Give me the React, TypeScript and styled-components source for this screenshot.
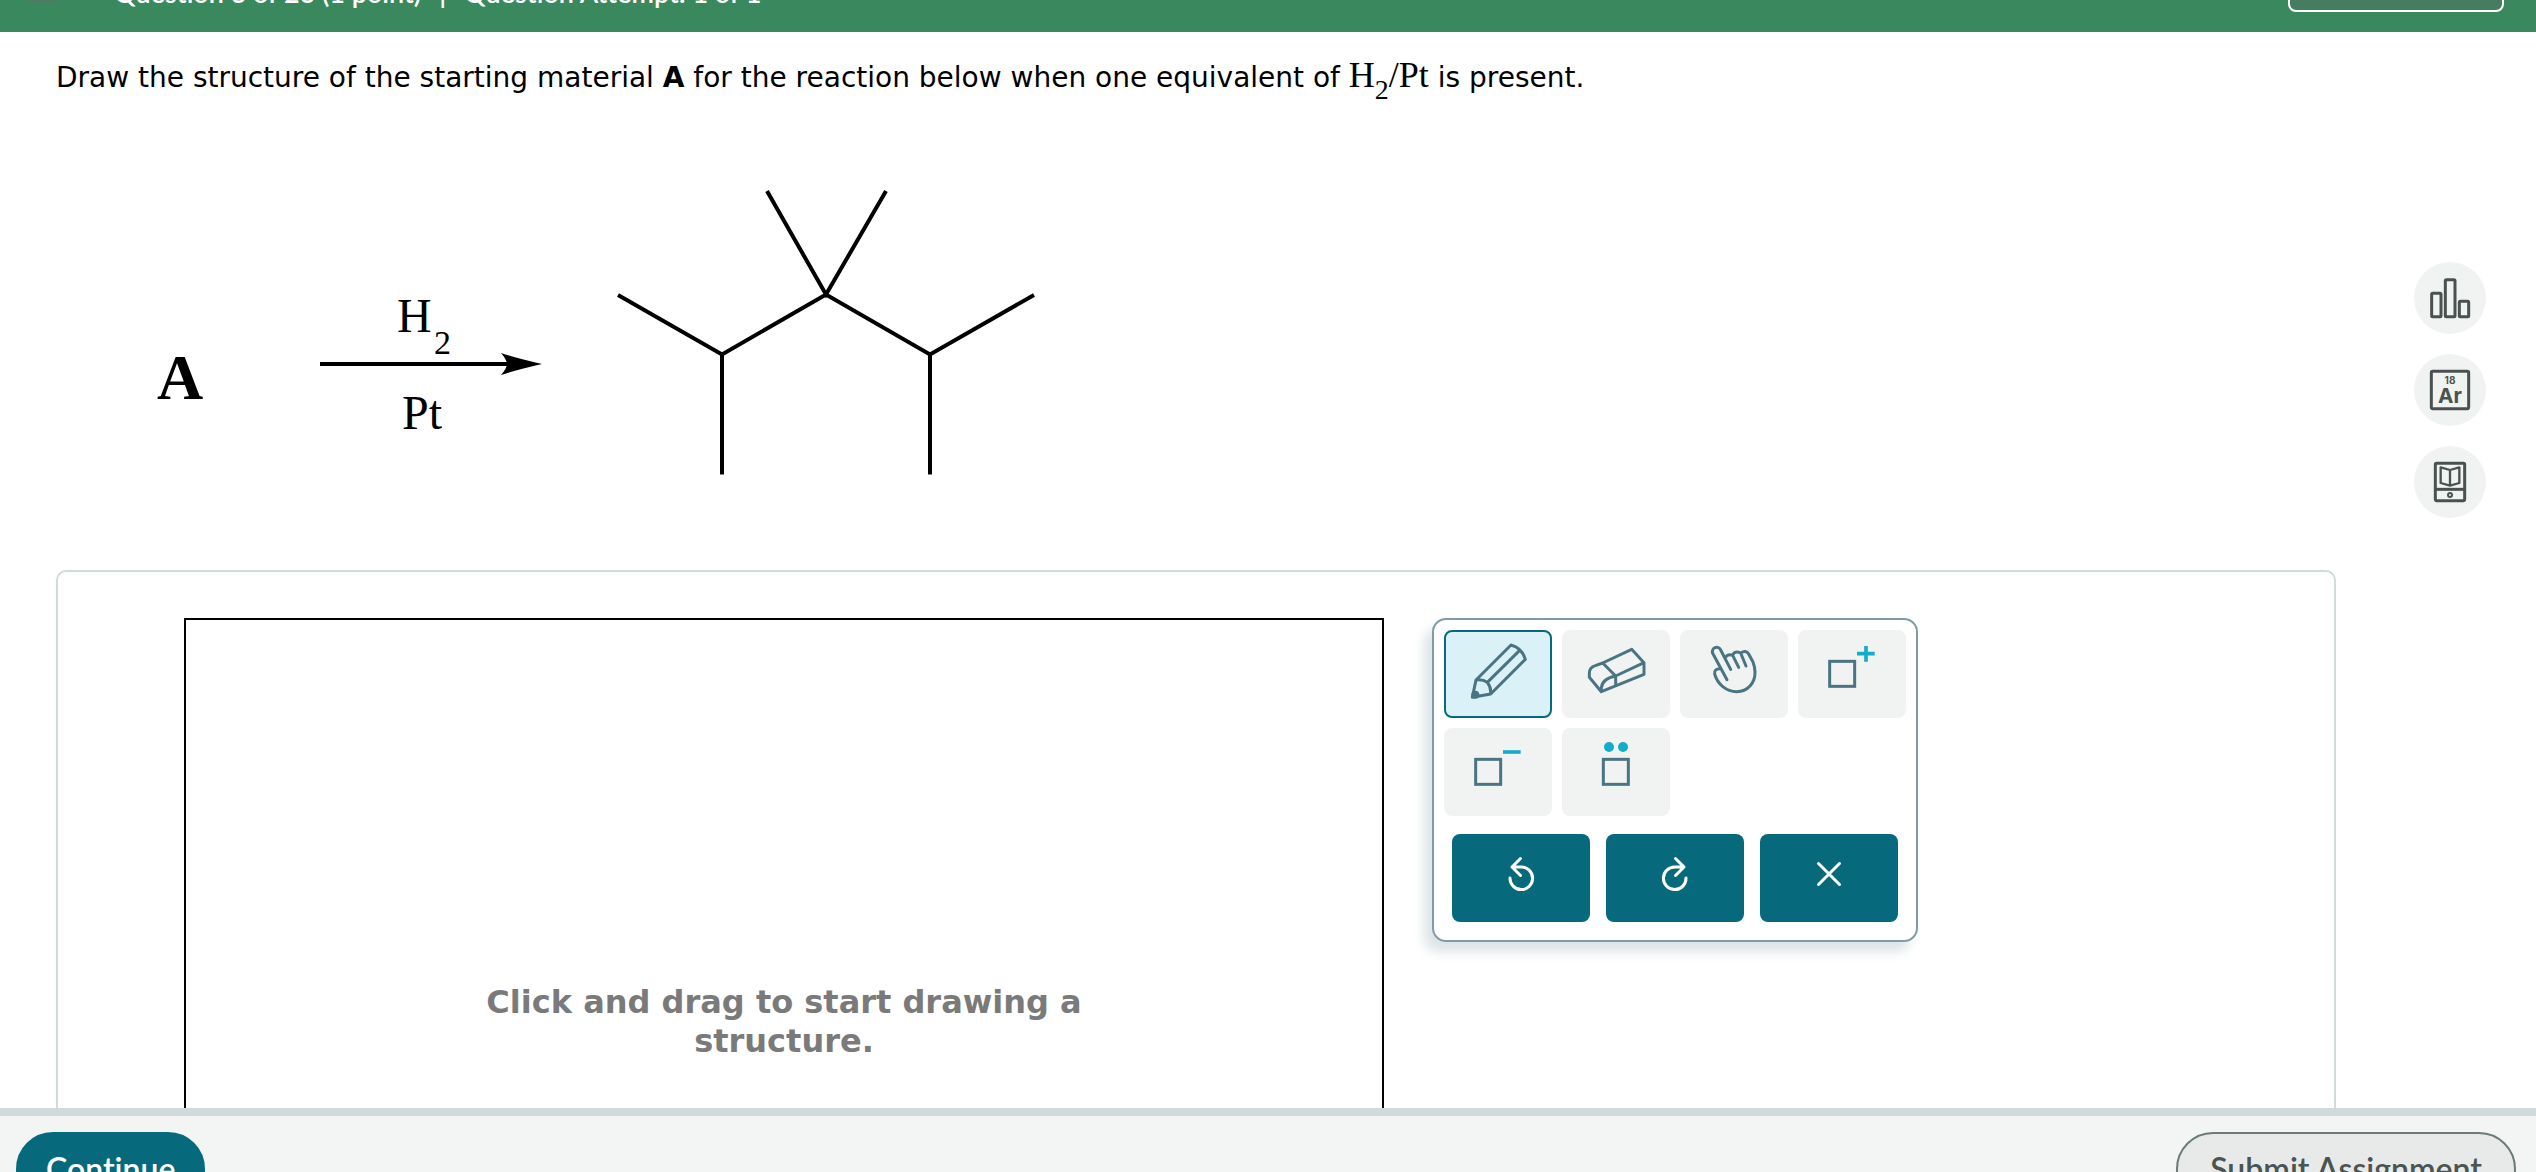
import React from "react";
import styled, { createGlobalStyle } from "styled-components";

const Global = createGlobalStyle`
  * { box-sizing: border-box; }
  body { margin: 0; background: #fff; color: #000; font-family: "DejaVu Sans", sans-serif; }
  button { font: inherit; margin: 0; padding: 0; border: 0; cursor: pointer; }
`;

const uiFont = `Lato, "Open Sans", sans-serif`;
const serifFont = `"Liberation Serif", serif`;

const Page = styled.div`
  height: 100vh;
  display: flex;
  flex-direction: column;
  overflow: hidden;
`;

const TopBar = styled.header`
  flex: none;
  height: 32px;
  display: flex;
  align-items: flex-end;
  padding: 0 32px 0 7px;
  overflow: hidden;
  background: #3a885d;
  color: #fff;
  font-family: ${uiFont};
`;

const MenuButton = styled.button`
  flex: none;
  width: 72px;
  height: 72px;
  && { margin-bottom: 28px; }
  border-radius: 50%;
  background: #4a7d62;
`;

const Progress = styled.p`
  flex: 1;
  display: flex;
  gap: 18px;
  margin: 0 0 23px 35px;
  font-size: 27px;
  font-weight: 600;
  font-variant-ligatures: none;
  line-height: 32px;
  white-space: nowrap;
`;

const HeaderButton = styled.button`
  flex: none;
  width: 216px;
  height: 56px;
  && { margin-bottom: 20px; border: 2px solid #fff; }
  border-radius: 8px;
  background: #467c60;
  color: #fff;
`;

const Body = styled.div`
  flex: 1;
  min-height: 0;
  display: grid;
  grid-template-columns: minmax(0, 1fr) 200px;
  overflow: hidden;
`;

const Question = styled.main`
  padding: 24px 0 0 56px;
`;

const Prompt = styled.p`
  margin: 0;
  font-size: 28px;
  line-height: 44px;
`;

const Formula = styled.span`
  font-family: ${serifFont};
  font-size: 36px;
  line-height: 32px;
`;

const Sub = styled.sub`
  font-size: 28px;
  line-height: 0;
  vertical-align: -12px;
`;

const Scheme = styled.svg`
  display: block;
  width: 1000px;
  height: 440px;
  margin-bottom: 30px;
  text { font-family: ${serifFont}; }
`;

const Workspace = styled.section`
  display: flex;
  align-items: flex-start;
  gap: 48px;
  padding: 46px 126px;
  border: 2px solid #d0dcdc;
  border-radius: 10px;
`;

const DrawArea = styled.div`
  flex: 0 1 1200px;
  height: 808px;
  display: flex;
  align-items: center;
  justify-content: center;
  border: 2px solid #000;
`;

const Hint = styled.p`
  width: 640px;
  margin: 0;
  color: #7a7a7a;
  font-size: 32px;
  font-weight: 700;
  line-height: 39px;
  text-align: center;
`;

const Palette = styled.div`
  flex: none;
  padding: 10px;
  border: 2px solid #7f9ca6;
  border-radius: 14px;
  background: #fff;
  box-shadow: -8px 10px 12px #dde4e7;
`;

const Tools = styled.div`
  display: grid;
  grid-template-columns: repeat(4, 108px);
  gap: 10px;
`;

const ToolButton = styled.button<{ $active?: boolean }>`
  && {
    height: 88px;
    padding-bottom: 8px;
    border: 2px solid ${(p) => (p.$active ? "#066a7c" : "#f1f3f3")};
  }
  display: flex;
  align-items: center;
  justify-content: center;
  border-radius: 8px;
  background: ${(p) => (p.$active ? "#daf2f7" : "#f1f3f3")};
`;

const ToolIcon = styled.svg.attrs({ viewBox: "0 0 216 216" })`
  width: 72px;
  height: 72px;
  fill: none;
  stroke: #4a7482;
  stroke-width: 9;
  stroke-linejoin: round;
`;

const Actions = styled.div`
  display: grid;
  grid-template-columns: repeat(3, 1fr);
  gap: 16px;
  margin: 18px 8px 8px;
`;

const ActionButton = styled.button`
  height: 88px;
  display: flex;
  align-items: center;
  justify-content: center;
  border-radius: 8px;
  background: #076a7c;
`;

const ActionIcon = styled.svg.attrs({ viewBox: "0 0 48 48" })`
  width: 48px;
  height: 48px;
  fill: none;
  stroke: #fff;
  stroke-width: 3;
  stroke-linecap: round;
  stroke-linejoin: round;
`;

const SideTools = styled.aside`
  display: flex;
  flex-direction: column;
  align-items: flex-end;
  gap: 20px;
  padding: 230px 50px 0 0;
`;

const RoundButton = styled.button`
  width: 72px;
  height: 72px;
  border-radius: 50%;
  background: #f1f3f3;
`;

const SideIcon = styled.svg.attrs({ viewBox: "0 0 216 216" })`
  display: block;
  width: 72px;
  height: 72px;
  fill: none;
  stroke: #4a5250;
  stroke-width: 9;
  stroke-linejoin: round;
  text {
    fill: #4a5250;
    stroke: none;
    font-family: Inter, sans-serif;
    font-weight: 700;
    text-anchor: middle;
  }
`;

const Footer = styled.footer`
  flex: none;
  height: 64px;
  display: flex;
  justify-content: space-between;
  align-items: flex-start;
  padding: 16px 20px 0 16px;
  border-top: 8px solid #d0dadd;
  background: #f3f5f5;
  overflow: hidden;
`;

const PillButton = styled.button<{ $primary?: boolean }>`
  && {
    flex: none;
    height: 74px;
    padding: 0 ${(p) => (p.$primary ? 28 : 32)}px;
    border: 2px solid ${(p) => (p.$primary ? "#076a7c" : "#6b7b79")};
    font-family: ${uiFont};
    font-size: 32px;
    font-weight: 600;
    font-variant-ligatures: none;
    line-height: 40px;
  }
  border-radius: 38px;
  background: ${(p) => (p.$primary ? "#076a7c" : "#e8eae9")};
  color: ${(p) => (p.$primary ? "#fff" : "#4a5452")};
`;

const Reaction = () => (
  <Scheme viewBox="56 100 1000 440" role="img" aria-label="A reacts with H2 over Pt">
    <text x="157" y="399" fontSize="64" fontWeight="700">A</text>
    <text x="397" y="332" fontSize="48">H</text>
    <text x="434" y="354" fontSize="34">2</text>
    <text x="402" y="429" fontSize="48">Pt</text>
    <path d="M320 364H510" stroke="#000" strokeWidth="4" />
    <path d="M542 364Q516 370 501 375Q507 368 507 364Q507 360 501 353Q516 358 542 364Z" />
    <path
      d="M767 191L826 294.500L886 191M618 295L722 354.500L826 294.500L930 354.500L1034 295M722 354.500V474.500M930 354.500V474.500"
      fill="none"
      stroke="#000"
      strokeWidth="4"
    />
  </Scheme>
);

const Pencil = () => (
  <ToolIcon>
    <path d="M42 138L147 33Q180 42 190 76L86 180L31 190L42 138Q60 134 76 145Q88 160 86 180M76 145L176 46" />
    <circle cx="40" cy="182" r="12" fill="#4a7482" stroke="none" />
  </ToolIcon>
);

const Eraser = () => (
  <ToolIcon>
    <path d="M68 87L155 46L192 86V121L64 173L28 130V118Q28 100 46 95L68 87L107 126L192 86M107 126V154M64 173V162Q66 134 107 126" />
  </ToolIcon>
);

const Hand = () => (
  <ToolIcon strokeLinecap="round">
    <path
      d="M98 106L68 48A13 13 0 0 0 44 58L87 137M66 104Q48 104 50 120C58 150 85 173 116 173C150 173 172 145 171 114Q171 100 165 84L152 60Q144 46 128 57L144 96M82 70Q90 58 104 64L122 100M104 62Q112 49 128 57"
    />
  </ToolIcon>
);

const ChargeBox = ({ kind }: { kind: "plus" | "minus" | "pair" }) => (
  <ToolIcon>
    <rect x={kind === "pair" ? 70 : 41} y="82" width="75" height="75" strokeLinejoin="miter" />
    {kind === "plus" && <path d="M123 59H176M150 36V83" stroke="#14accb" strokeWidth="11" />}
    {kind === "minus" && <path d="M123 60H176" stroke="#14accb" strokeWidth="11" />}
    {kind === "pair" && (
      <g fill="#14accb" stroke="none">
        <circle cx="87" cy="45" r="15" />
        <circle cx="129" cy="45" r="15" />
      </g>
    )}
  </ToolIcon>
);

export default function App() {
  return (
    <Page>
      <Global />
      <TopBar>
        <MenuButton aria-label="Menu" />
        <Progress>
          <span>Question 3 of 26 (1 point)</span>
          <span>|</span>
          <span>Question Attempt: 1 of 1</span>
        </Progress>
        <HeaderButton aria-label="Time remaining" />
      </TopBar>

      <Body>
        <Question>
          <Prompt>
            Draw the structure of the starting material <b>A</b> for the reaction below when one
            equivalent of{" "}
            <Formula>
              H<Sub>2</Sub>/Pt
            </Formula>{" "}
            is present.
          </Prompt>
          <Reaction />
          <Workspace>
            <DrawArea>
              <Hint>Click and drag to start drawing a structure.</Hint>
            </DrawArea>
            <Palette>
              <Tools>
                <ToolButton $active aria-label="Draw"><Pencil /></ToolButton>
                <ToolButton aria-label="Erase"><Eraser /></ToolButton>
                <ToolButton aria-label="Move"><Hand /></ToolButton>
                <ToolButton aria-label="Positive charge"><ChargeBox kind="plus" /></ToolButton>
                <ToolButton aria-label="Negative charge"><ChargeBox kind="minus" /></ToolButton>
                <ToolButton aria-label="Lone pair"><ChargeBox kind="pair" /></ToolButton>
              </Tools>
              <Actions>
                <ActionButton aria-label="Undo">
                  <ActionIcon>
                    <path d="M13 24A11.300 11.300 0 1 0 24 13H15M23.500 4.500L15 13L23.500 21.500" />
                  </ActionIcon>
                </ActionButton>
                <ActionButton aria-label="Redo">
                  <ActionIcon>
                    <path d="M35 24A11.300 11.300 0 1 1 24 13H33M24.500 4.500L33 13L24.500 21.500" />
                  </ActionIcon>
                </ActionButton>
                <ActionButton aria-label="Clear">
                  <ActionIcon>
                    <path d="M13.500 9.500L34.500 30.500M34.500 9.500L13.500 30.500" />
                  </ActionIcon>
                </ActionButton>
              </Actions>
            </Palette>
          </Workspace>
        </Question>

        <SideTools>
          <RoundButton aria-label="Data">
            <SideIcon>
              <rect x="53" y="94" width="28" height="70" rx="3" />
              <rect x="94" y="53" width="29" height="111" rx="3" />
              <rect x="136" y="118" width="28" height="46" rx="3" />
            </SideIcon>
          </RoundButton>
          <RoundButton aria-label="Periodic table">
            <SideIcon>
              <rect x="52" y="52" width="112" height="112" rx="4" />
              <text x="108" y="90" fontSize="30">18</text>
              <text x="108" y="148" fontSize="62">Ar</text>
            </SideIcon>
          </RoundButton>
          <RoundButton aria-label="Reference">
            <SideIcon>
              <rect x="64" y="52" width="88" height="112" rx="4" />
              <path d="M64 130H152" />
              <path strokeWidth="7" d="M108 72L80 64V111L108 119L136 111V64ZV119" />
              <circle cx="108" cy="147" r="6" strokeWidth="6" />
            </SideIcon>
          </RoundButton>
        </SideTools>
      </Body>

      <Footer>
        <PillButton $primary>Continue</PillButton>
        <PillButton>Submit Assignment</PillButton>
      </Footer>
    </Page>
  );
}
